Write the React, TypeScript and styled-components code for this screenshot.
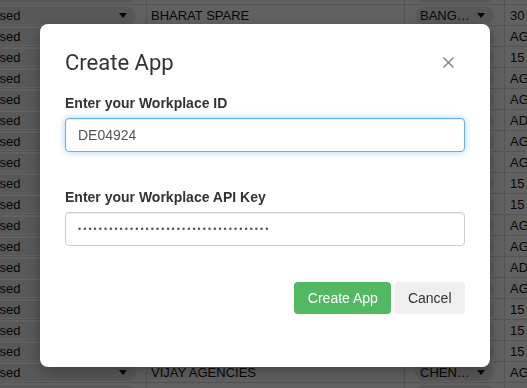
import styled, { createGlobalStyle } from "styled-components";

interface rowProps {
  status: string;
  name: string;
  city: string;
  code: string;
}

const GlobalStyle = createGlobalStyle`
  html, body {
    margin: 0;
    padding: 0;
    overflow: hidden;
    background: #fff;
    font-family: "Liberation Sans", Arial, sans-serif;
  }
`;

const rows: rowProps[] = [
  { status: "Closed", name: "SRI BALAJI MOTORS", city: "BANG…", code: "AG" },
  { status: "Closed", name: "BHARAT SPARE", city: "BANG…", code: "30" },
  { status: "Closed", name: "KRISHNA AUTO", city: "BANG…", code: "AG" },
  { status: "Closed", name: "GANESH TRADERS", city: "MYSO…", code: "15" },
  { status: "Closed", name: "SAI AUTOMOBILES", city: "BANG…", code: "AG" },
  { status: "Closed", name: "LAKSHMI MOTORS", city: "HUBL…", code: "AG" },
  { status: "Closed", name: "MAHAVEER AUTO", city: "BANG…", code: "AD" },
  { status: "Closed", name: "RAJ ENTERPRISES", city: "CHEN…", code: "AG" },
  { status: "Closed", name: "SHREE PARTS", city: "BANG…", code: "AG" },
  { status: "Closed", name: "VINAYAKA SALES", city: "MYSO…", code: "15" },
  { status: "Closed", name: "NEW INDIA AUTO", city: "BANG…", code: "15" },
  { status: "Closed", name: "JAI HIND MOTORS", city: "CHEN…", code: "AG" },
  { status: "Closed", name: "SURYA AGENCIES", city: "BANG…", code: "AG" },
  { status: "Closed", name: "AMBIKA AUTO", city: "HUBL…", code: "AD" },
  { status: "Closed", name: "PADMA TRADERS", city: "BANG…", code: "AG" },
  { status: "Closed", name: "BALAJI SPARES", city: "CHEN…", code: "15" },
  { status: "Closed", name: "MURUGAN AUTO", city: "CHEN…", code: "15" },
  { status: "Closed", name: "KAVERI MOTORS", city: "BANG…", code: "15" },
  { status: "Closed", name: "VIJAY AGENCIES", city: "CHEN…", code: "AG" },
  { status: "Closed", name: "ANAND AUTO", city: "BANG…", code: "15" },
];

const App = () => {
  return (
    <>
      <GlobalStyle />
      <Page>
        <Grid>
          {rows.map((row, i) => (
            <Row key={i}>
              <StatusCell>
                <Pill>
                  <PillText>{row.status}</PillText>
                  <Caret />
                </Pill>
              </StatusCell>
              <NameCell>{row.name}</NameCell>
              <CityCell>
                <Pill>
                  <PillText>{row.city}</PillText>
                  <Caret />
                </Pill>
              </CityCell>
              <CodeCell>{row.code}</CodeCell>
            </Row>
          ))}
        </Grid>
        <Backdrop>
          <Modal>
            <ModalHeader>
              <ModalTitle>Create App</ModalTitle>
              <CloseButton aria-label="Close">
                <svg width="11" height="11" viewBox="0 0 11 11">
                  <path
                    d="M0.5 0.5 L10.5 10.5 M10.5 0.5 L0.5 10.5"
                    stroke="#7a7a7a"
                    strokeWidth="1.3"
                    fill="none"
                  />
                </svg>
              </CloseButton>
            </ModalHeader>
            <ModalBody>
              <Field>
                <Label>Enter your Workplace ID</Label>
                <Input $focused defaultValue="DE04924" />
              </Field>
              <Field>
                <Label>Enter your Workplace API Key</Label>
                <Input
                  $secret
                  readOnly
                  defaultValue={"•".repeat(37)}
                />
              </Field>
            </ModalBody>
            <ModalFooter>
              <Button $primary>Create App</Button>
              <Button>Cancel</Button>
            </ModalFooter>
          </Modal>
        </Backdrop>
      </Page>
    </>
  );
};

const Page = styled.div`
  position: relative;
  width: 527px;
  height: 388px;
  overflow: hidden;
`;

const Grid = styled.div`
  display: flex;
  flex-direction: column;
  margin-top: -16px;
  margin-left: -35px;
  font-size: 13px;
  color: #111;
`;

const Row = styled.div`
  display: flex;
  width: max-content;
  height: 21px;
  box-sizing: border-box;
  border-bottom: 1px solid #dcdcdc;
  background: #fff;
`;

const Cell = styled.div`
  flex-shrink: 0;
  display: flex;
  align-items: center;
  box-sizing: border-box;
  border-right: 1px solid #dcdcdc;
  white-space: nowrap;
  overflow: hidden;
`;

const StatusCell = styled(Cell)`
  width: 182px;
  padding: 0 10px;
`;

const NameCell = styled(Cell)`
  width: 258px;
  padding-left: 4px;
`;

const CityCell = styled(Cell)`
  width: 100px;
  padding: 0 10px;
`;

const CodeCell = styled(Cell)`
  width: 60px;
  padding-left: 5px;
  border-right: none;
`;

const Pill = styled.div`
  flex: 1;
  display: flex;
  align-items: center;
  justify-content: space-between;
  height: 17px;
  padding: 0 9px 0 5px;
  border-radius: 9px;
  background: #e8e8e8;
`;

const PillText = styled.span`
  overflow: hidden;
`;

const Caret = styled.span`
  width: 0;
  height: 0;
  border-left: 4px solid transparent;
  border-right: 4px solid transparent;
  border-top: 5px solid #111;
`;

const Backdrop = styled.div`
  position: fixed;
  inset: 0;
  display: flex;
  align-items: flex-start;
  padding: 24px 0 0 40px;
  background: rgba(0, 0, 0, 0.62);
`;

const Modal = styled.div`
  width: 450px;
  height: 343px;
  box-sizing: border-box;
  background: #fff;
  border-radius: 8px;
  box-shadow: 0 5px 15px rgba(0, 0, 0, 0.3);
  display: flex;
  flex-direction: column;
`;

const ModalHeader = styled.div`
  display: flex;
  justify-content: space-between;
  align-items: flex-start;
  padding: 24px 25px 0;
`;

const ModalTitle = styled.h4`
  margin: 0;
  font-family: Roboto, "Liberation Sans", sans-serif;
  font-weight: 400;
  font-size: 22px;
  line-height: 30px;
  color: #333;
`;

const CloseButton = styled.button`
  margin: 9px 11px 0 0;
  padding: 0;
  width: 11px;
  height: 11px;
  border: none;
  background: none;
  display: flex;
`;

const ModalBody = styled.div`
  display: flex;
  flex-direction: column;
  gap: 35px;
  padding: 15px 25px 0;
`;

const Field = styled.div`
  display: flex;
  flex-direction: column;
  gap: 5px;
`;

const Label = styled.label`
  font-weight: 700;
  font-size: 14px;
  line-height: 20px;
  color: #333;
`;

const Input = styled.input<{ $focused?: boolean; $secret?: boolean }>`
  box-sizing: border-box;
  width: 100%;
  height: 34px;
  padding: 0 12px;
  border-radius: 4px;
  border: 1px solid ${(p) => (p.$focused ? "#66afe9" : "#cccccc")};
  box-shadow: ${(p) =>
    p.$focused
      ? "inset 0 1px 1px rgba(0,0,0,.075), 0 0 7px rgba(102,175,233,.55)"
      : "inset 0 1px 1px rgba(0,0,0,.075)"};
  font-family: "Liberation Sans", Arial, sans-serif;
  font-size: ${(p) => (p.$secret ? "9px" : "14px")};
  letter-spacing: ${(p) => (p.$secret ? "2.05px" : "0")};
  color: #555;
  outline: none;
`;

const ModalFooter = styled.div`
  display: flex;
  justify-content: flex-end;
  gap: 3px;
  padding: 36px 25px 0;
`;

const Button = styled.button<{ $primary?: boolean }>`
  height: 32px;
  padding: 0 13.5px;
  border: none;
  border-radius: 4px;
  font-family: "Liberation Sans", Arial, sans-serif;
  font-size: 14px;
  color: ${(p) => (p.$primary ? "#fff" : "#333")};
  background: ${(p) => (p.$primary ? "#52b862" : "#efefef")};
`;

export default App;
